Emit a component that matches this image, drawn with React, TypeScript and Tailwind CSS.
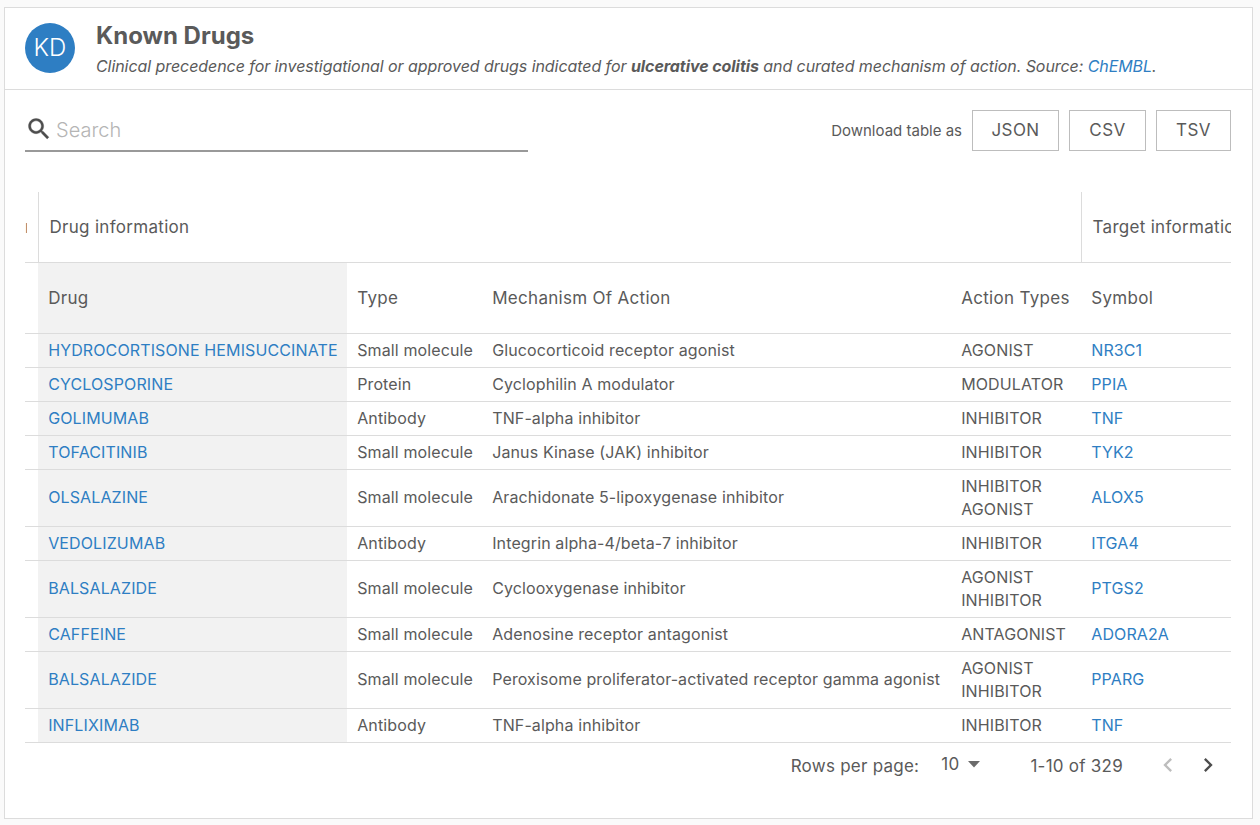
type Row = { drug: string; type: string; moa: string; actions: string[]; symbol: string };

const rows: Row[] = [
    { drug: 'HYDROCORTISONE HEMISUCCINATE', type: 'Small molecule', moa: 'Glucocorticoid receptor agonist', actions: ['AGONIST'], symbol: 'NR3C1' },
    { drug: 'CYCLOSPORINE', type: 'Protein', moa: 'Cyclophilin A modulator', actions: ['MODULATOR'], symbol: 'PPIA' },
    { drug: 'GOLIMUMAB', type: 'Antibody', moa: 'TNF-alpha inhibitor', actions: ['INHIBITOR'], symbol: 'TNF' },
    { drug: 'TOFACITINIB', type: 'Small molecule', moa: 'Janus Kinase (JAK) inhibitor', actions: ['INHIBITOR'], symbol: 'TYK2' },
    { drug: 'OLSALAZINE', type: 'Small molecule', moa: 'Arachidonate 5-lipoxygenase inhibitor', actions: ['INHIBITOR', 'AGONIST'], symbol: 'ALOX5' },
    { drug: 'VEDOLIZUMAB', type: 'Antibody', moa: 'Integrin alpha-4/beta-7 inhibitor', actions: ['INHIBITOR'], symbol: 'ITGA4' },
    { drug: 'BALSALAZIDE', type: 'Small molecule', moa: 'Cyclooxygenase inhibitor', actions: ['AGONIST', 'INHIBITOR'], symbol: 'PTGS2' },
    { drug: 'CAFFEINE', type: 'Small molecule', moa: 'Adenosine receptor antagonist', actions: ['ANTAGONIST'], symbol: 'ADORA2A' },
    { drug: 'BALSALAZIDE', type: 'Small molecule', moa: 'Peroxisome proliferator-activated receptor gamma agonist', actions: ['AGONIST', 'INHIBITOR'], symbol: 'PPARG' },
    { drug: 'INFLIXIMAB', type: 'Antibody', moa: 'TNF-alpha inhibitor', actions: ['INHIBITOR'], symbol: 'TNF' },
];

function SearchIcon() {
    return (
        <svg width="28" height="28" viewBox="0 0 24 24" fill="#4d4d4d" stroke="#4d4d4d" strokeWidth="0.3">
            <path d="M15.5 14h-.79l-.28-.27C15.41 12.59 16 11.11 16 9.5 16 5.91 13.09 3 9.5 3S3 5.91 3 9.5 5.91 16 9.5 16c1.61 0 3.09-.59 4.23-1.57l.27.28v.79l5 4.99L20.49 19l-4.99-5zm-6 0C7.01 14 5 11.99 5 9.5S7.01 5 9.5 5 14 7.01 14 9.5 11.99 14 9.5 14z" />
        </svg>
    );
}

function PageArrow({ d, color }: { d: string; color: string }) {
    return (
        <svg width="28" height="28" viewBox="0 0 24 24" fill={color}>
            <path d={d} />
        </svg>
    );
}

export default function App() {
    return (
        <div className="min-h-[825px] bg-[#fafafa] pt-[7px] pl-[4px] pr-[7px] font-['Inter',sans-serif] text-[#5a5a5a] antialiased">
            <div className="h-[812px] border border-[#dcdcdc] bg-white">
                {/* Section header */}
                <div className="flex h-[82px] items-start gap-[21px] border-b border-[#dcdcdc] pl-[20px] pt-[15px]">
                    <div className="flex h-[50px] w-[50px] items-center justify-center rounded-full bg-[#2e7ec3] text-[24px] font-light text-white">
                        KD
                    </div>
                    <div>
                        <h2 className="-mt-[1px] text-[24px] leading-[28px] font-bold">Known Drugs</h2>
                        <p className="mt-[5px] text-[16px] leading-[22px] tracking-[-0.07px] italic">
                            Clinical precedence for investigational or approved drugs indicated for <b>ulcerative colitis</b> and curated mechanism of action. Source: <a className="text-[#2e7ec3]">ChEMBL</a>.
                        </p>
                    </div>
                </div>

                {/* Toolbar */}
                <div className="flex h-[102px] items-start justify-between pl-[20px] pr-[21px] pt-[20px]">
                    <div className="flex h-[42px] w-[503px] items-center gap-[3px] border-b-2 border-[#999999] pb-[2px]">
                        <SearchIcon />
                        <span className="translate-y-[1px] text-[20px] font-light text-[#b5b5b5]">Search</span>
                    </div>
                    <div className="flex items-center">
                        <span className="mr-[10px] translate-y-[1px] text-[15px]">Download table as</span>
                        <button className="h-[41px] w-[87px] border border-[#bdbdbd] pt-[1px] text-[17px] tracking-[0.4px]">JSON</button>
                        <button className="ml-[10px] h-[41px] w-[77px] border border-[#bdbdbd] pt-[1px] text-[17px] tracking-[0.4px]">CSV</button>
                        <button className="ml-[10px] h-[41px] w-[75px] border border-[#bdbdbd] pt-[1px] text-[17px] tracking-[0.4px]">TSV</button>
                    </div>
                </div>

                {/* Table */}
                <div className="ml-[20px] w-[1206px] overflow-hidden">
                    <table className="w-[1356px] table-fixed border-collapse text-[16px] tracking-[0.12px]">
                        <colgroup>
                            <col className="w-[13px]" />
                            <col className="w-[309px]" />
                            <col className="w-[135px]" />
                            <col className="w-[469px]" />
                            <col className="w-[130px]" />
                            <col className="w-[300px]" />
                        </colgroup>
                        <thead>
                            <tr className="h-[70px] border-b border-[#dcdcdc] text-[17px] tracking-[0.3px]">
                                <th className="overflow-hidden border-r border-[#dcdcdc] pt-[2px] font-normal">
                                    <span className="block w-[2px] overflow-hidden opacity-90">n</span>
                                </th>
                                <th colSpan={4} className="pl-[11px] pt-[2px] text-left font-normal">Drug information</th>
                                <th className="border-l border-[#dcdcdc] pl-[11px] pt-[2px] text-left font-normal">Target information</th>
                            </tr>
                            <tr className="h-[71px] border-b border-[#dcdcdc] text-[17px] tracking-[0.3px]">
                                <th />
                                <th className="bg-[#f2f2f2] pl-[10.2px] pt-[2px] text-left font-normal">Drug</th>
                                <th className="pl-[10.2px] pt-[2px] text-left font-normal">Type</th>
                                <th className="pl-[10.2px] pt-[2px] text-left font-normal">Mechanism Of Action</th>
                                <th className="pl-[10.2px] pt-[2px] text-left font-normal">Action Types</th>
                                <th className="pl-[10.2px] pt-[2px] text-left font-normal">Symbol</th>
                            </tr>
                        </thead>
                        <tbody className="leading-[23px]">
                            {rows.map((row, i) => (
                                <tr key={i} className={`border-b border-[#dcdcdc] ${row.actions.length > 1 ? 'h-[57px]' : 'h-[34px]'}`}>
                                    <td />
                                    <td className="bg-[#f2f2f2] pl-[10.2px] whitespace-nowrap text-[#2e7ec3]">{row.drug}</td>
                                    <td className="pl-[10.2px] whitespace-nowrap">{row.type}</td>
                                    <td className="pl-[10.2px] whitespace-nowrap">{row.moa}</td>
                                    <td className="pl-[10.2px] whitespace-nowrap">
                                        {row.actions.map((a) => (
                                            <div key={a}>{a}</div>
                                        ))}
                                    </td>
                                    <td className="pl-[10.2px] whitespace-nowrap text-[#2e7ec3]">{row.symbol}</td>
                                </tr>
                            ))}
                        </tbody>
                    </table>
                </div>

                {/* Pagination */}
                <div className="flex h-[48px] w-[1226px] items-center justify-end text-[17px] tracking-[0.25px]">
                    <span>Rows per page:</span>
                    <span className="ml-[22px] -translate-y-[2px]">10</span>
                    <svg className="ml-[8px] -translate-y-[2px]" width="14" height="7" viewBox="0 0 14 7" fill="#6b6b6b">
                        <path d="M1 0h12L7 6.5z" />
                    </svg>
                    <span className="ml-[49px]">1-10 of 329</span>
                    <div className="ml-[31px] flex -translate-y-[2px] items-center gap-[12px]">
                        <PageArrow color="#bdbdbd" d="M15.41 7.41L14 6l-6 6 6 6 1.41-1.41L10.83 12z" />
                        <PageArrow color="#4d4d4d" d="M10 6L8.59 7.41 13.17 12l-4.58 4.59L10 18l6-6z" />
                    </div>
                    <span className="w-[9px]" />
                </div>
            </div>
        </div>
    );
}
